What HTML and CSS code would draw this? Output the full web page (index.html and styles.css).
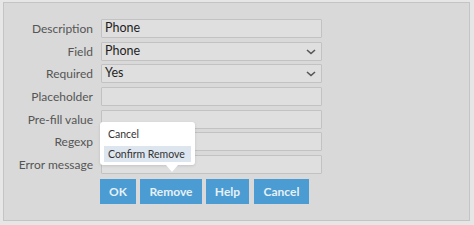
FILE: index.html
```html
<!DOCTYPE html>
<html lang="en">
<head>
  <meta charset="UTF-8">
  <title>Field editor</title>
  <link rel="stylesheet" href="styles.css">
</head>
<body>
  <div class="panel">
    <div class="form">
      <label class="form-label">Description</label>
      <div class="control">Phone</div>

      <label class="form-label">Field</label>
      <div class="control select">Phone
        <svg class="chevron" viewBox="0 0 10 6" width="10" height="6"><path d="M1 1l4 3.5L9 1" fill="none" stroke="#555" stroke-width="1.6"/></svg>
      </div>

      <label class="form-label">Required</label>
      <div class="control select">Yes
        <svg class="chevron" viewBox="0 0 10 6" width="10" height="6"><path d="M1 1l4 3.5L9 1" fill="none" stroke="#555" stroke-width="1.6"/></svg>
      </div>

      <label class="form-label">Placeholder</label>
      <div class="control"></div>

      <label class="form-label">Pre-fill value</label>
      <div class="control"></div>

      <label class="form-label">Regexp</label>
      <div class="control"></div>

      <label class="form-label">Error message</label>
      <div class="control"></div>

      <div></div>
      <div class="actions">
        <button class="btn btn-ok">OK</button>
        <div class="remove-wrap">
          <button class="btn btn-remove">Remove</button>
          <!-- confirmation popover -->
          <div class="popover">
            <div class="popover-item">Cancel</div>
            <div class="popover-item active">Confirm Remove</div>
          </div>
        </div>
        <button class="btn btn-help">Help</button>
        <button class="btn btn-cancel">Cancel</button>
      </div>
    </div>
  </div>
</body>
</html>
```

FILE: styles.css
```css
* {
  margin: 0;
  padding: 0;
  box-sizing: border-box;
}

body {
  background: #e6e6e6;
  font-family: Lato, "Open Sans", sans-serif;
  font-size: 12px;
  width: 474px;
  height: 225px;
  padding: 2px 0 0 3px;
}

.panel {
  width: 467px;
  height: 219px;
  background: #d9d9d9;
  border: 1px solid #c4c4c4;
  padding-top: 16px;
}

.form {
  display: grid;
  grid-template-columns: 89px 221px;
  column-gap: 8px;
  row-gap: 3.7px;
  align-items: center;
}

.form-label {
  text-align: right;
  color: #555;
  white-space: nowrap;
}

.control {
  position: relative;
  height: 19px;
  line-height: 16px;
  background: #dfdfdf;
  border: 1.5px solid #c2c2c2;
  border-radius: 1px;
  padding-left: 3px;
  color: #1e1e1e;
  font-size: 12.5px;
}

.chevron {
  position: absolute;
  right: 5px;
  top: 6px;
}

.actions {
  display: flex;
  gap: 4px;
  margin-top: 1px;
  margin-left: -1px;
}

.btn {
  height: 25px;
  border: 0;
  background: #4a9cd2;
  color: #e6f0f7;
  font-family: inherit;
  font-size: 12px;
  font-weight: 700;
}

.btn-ok { width: 36px; }
.btn-remove { width: 62px; }
.btn-help { width: 43px; }
.btn-cancel { width: 55px; margin-left: 1px; }

.remove-wrap {
  position: relative;
}

.popover {
  position: absolute;
  left: -40px;
  bottom: 39px;
  width: 95px;
  height: 43px;
  background: #fff;
  border-radius: 3px;
  box-shadow: 0 1px 3px rgba(0, 0, 0, 0.12);
  padding: 4px 4px 0;
  font-size: 10.5px;
  color: #333;
  white-space: nowrap;
}

.popover::after {
  content: "";
  position: absolute;
  left: 66px;
  bottom: -7px;
  border-left: 6px solid transparent;
  border-right: 6px solid transparent;
  border-top: 7px solid #fff;
}

.popover-item {
  height: 16px;
  line-height: 16px;
  padding-left: 4px;
  margin-bottom: 4px;
}

.popover-item.active {
  background: #dde5ee;
}
```
